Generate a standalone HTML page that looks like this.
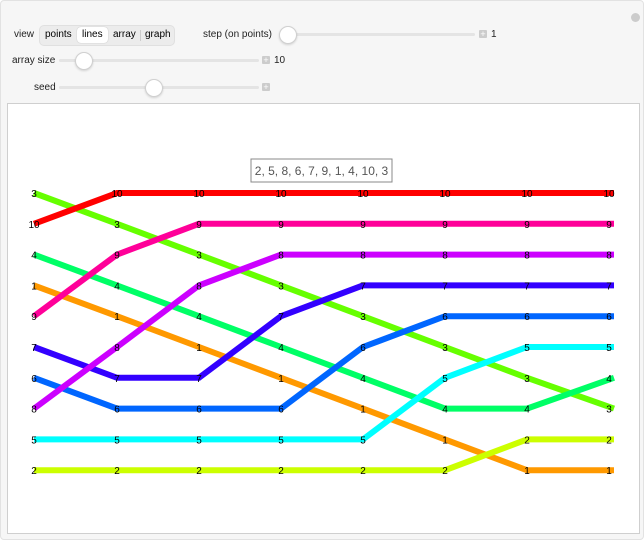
<!DOCTYPE html>
<html><head><meta charset="utf-8"><style>
body{margin:0;background:#fff;font-family:"Liberation Sans",sans-serif;}
.wrap{position:absolute;left:0;top:0;width:642px;height:538px;border:1px solid #e2e2e2;border-radius:4px;background:#f6f6f6;}
.lbl{position:absolute;font-size:10px;color:#222;}
.seg{position:absolute;left:38px;top:24px;height:19px;width:134px;background:#ececec;border:1px solid #e0e0e0;border-radius:5px;font-size:10px;}
.seg span{position:absolute;top:3px;}
.track{position:absolute;height:3px;background:#e4e4e4;border-radius:2px;}
.knob{position:absolute;width:16px;height:16px;border-radius:50%;background:#fff;border:1px solid #d0d0d0;box-shadow:0 1px 2px rgba(0,0,0,.15);}
.plus{position:absolute;width:8px;height:8px;background:#ccc;border-radius:1px;color:#fff;font-size:9px;line-height:8px;text-align:center;}
.plot{position:absolute;left:6px;top:102px;width:631px;height:429px;background:#fff;border:1px solid #cfcfcf;}
</style></head><body>
<div class="wrap">
<div style="position:absolute;left:630px;top:12px;width:9px;height:9px;border-radius:50%;background:#ccc;"></div>
<div class="lbl" style="left:13px;top:28px">view</div>
<div class="seg">
<span style="left:5px">points</span>
<div style="position:absolute;left:37px;top:1px;width:31px;height:16px;background:#fff;border-radius:4px;box-shadow:0 0 1px #aaa"></div>
<span style="left:42px">lines</span>
<span style="left:73px">array</span>
<div style="position:absolute;left:100px;top:4px;width:1px;height:11px;background:#ccc"></div>
<span style="left:105px">graph</span>
</div>
<div class="lbl" style="left:202px;top:28px">step (on points)</div>
<div class="track" style="left:278px;top:32px;width:196px"></div>
<div class="knob" style="left:278px;top:25px"></div>
<div class="plus" style="left:478px;top:29px">+</div>
<div class="lbl" style="left:490px;top:28px">1</div>
<div class="lbl" style="left:11px;top:54px">array size</div>
<div class="track" style="left:58px;top:58px;width:200px"></div>
<div class="knob" style="left:74px;top:51px"></div>
<div class="plus" style="left:261px;top:55px">+</div>
<div class="lbl" style="left:273px;top:54px">10</div>
<div class="lbl" style="left:33px;top:81px">seed</div>
<div class="track" style="left:58px;top:85px;width:200px"></div>
<div class="knob" style="left:144px;top:78px"></div>
<div class="plus" style="left:261px;top:82px">+</div>
<div class="plot"></div>
<svg id="s" width="644" height="540" style="position:absolute;left:0;top:0"></svg>
</div>
<script>
var cols=[[3,10,4,1,9,7,6,8,5,2],[10,3,9,4,1,8,7,6,5,2],[10,9,3,8,4,1,7,6,5,2],[10,9,8,3,7,4,1,6,5,2],[10,9,8,7,3,6,4,1,5,2],[10,9,8,7,6,3,5,4,1,2],[10,9,8,7,6,5,3,4,2,1],[10,9,8,7,6,5,4,3,2,1]];
var X=[33,116,198,280,362,444,526,608];
var col={10:"#ff0000",9:"#ff0099",8:"#cc00ff",7:"#3300ff",6:"#0066ff",5:"#00ffff",4:"#00ff66",3:"#66ff00",2:"#ccff00",1:"#ff9900"};
function Y(i){return 192+i*30.8;}
var h='<rect x="250" y="158" width="141" height="23" fill="#fff" stroke="#888"/><text x="320.5" y="174" font-size="12" fill="#555" text-anchor="middle" font-family="Liberation Sans">2, 5, 8, 6, 7, 9, 1, 4, 10, 3</text>';
for(var v=1;v<=10;v++){var p=[];for(var c=0;c<8;c++){var i=cols[c].indexOf(v);p.push(X[c]+","+Y(i));}
p[7]=(613)+","+Y(cols[7].indexOf(v));
h+='<polyline points="'+p.join(" ")+'" fill="none" stroke="'+col[v]+'" stroke-width="6"/>';}
for(var c=0;c<8;c++)for(var i=0;i<10;i++)h+='<text x="'+X[c]+'" y="'+(Y(i)+4)+'" font-size="10" text-anchor="middle" font-family="Liberation Sans">'+cols[c][i]+'</text>';
document.getElementById("s").innerHTML=h;
</script>
</body></html>
